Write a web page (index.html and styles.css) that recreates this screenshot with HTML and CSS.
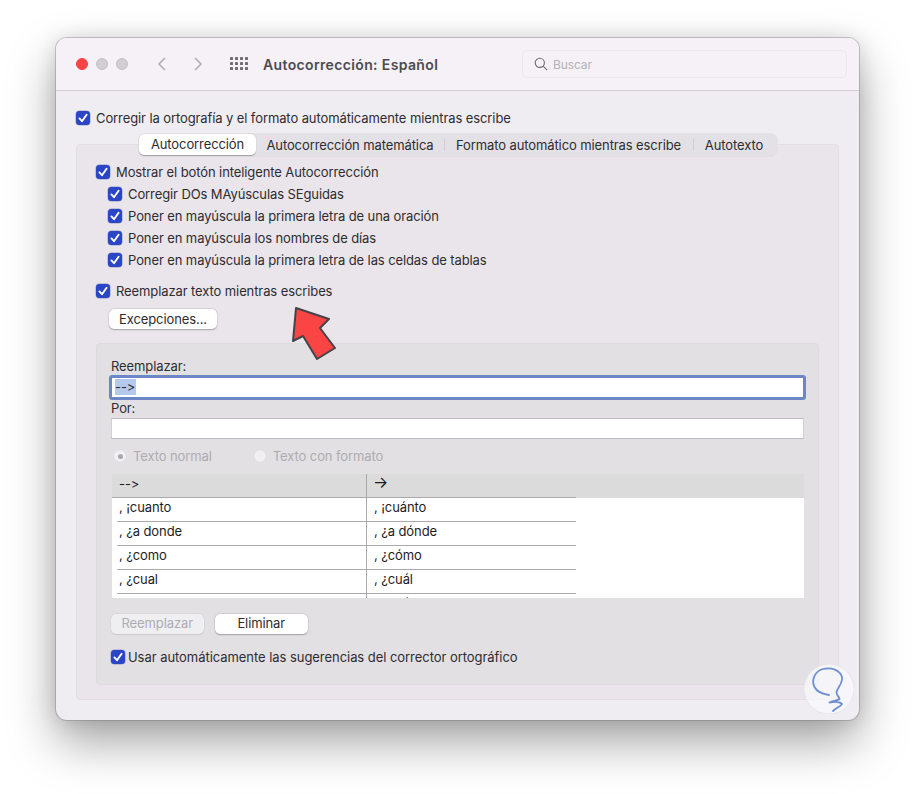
FILE: index.html
```html
<!DOCTYPE html>
<html lang="es">
<head>
<meta charset="utf-8">
<title>Autocorrección: Español</title>
<link rel="stylesheet" href="styles.css">
</head>
<body>
<div class="window">
  <header class="titlebar">
    <div class="lights"><span class="light red"></span><span class="light"></span><span class="light"></span></div>
    <svg class="chev" width="12" height="16" viewBox="0 0 12 16"><path d="M9 2 3 8l6 6"/></svg>
    <svg class="chev next" width="12" height="16" viewBox="0 0 12 16"><path d="m3 2 6 6-6 6"/></svg>
    <svg class="grid-icon" width="19" height="14" viewBox="0 0 19 14"><g><rect x="0" y="0" width="3" height="3" rx=".6"/><rect x="5" y="0" width="3" height="3" rx=".6"/><rect x="10" y="0" width="3" height="3" rx=".6"/><rect x="15" y="0" width="3" height="3" rx=".6"/><rect x="0" y="5" width="3" height="3" rx=".6"/><rect x="5" y="5" width="3" height="3" rx=".6"/><rect x="10" y="5" width="3" height="3" rx=".6"/><rect x="15" y="5" width="3" height="3" rx=".6"/><rect x="0" y="10" width="3" height="3" rx=".6"/><rect x="5" y="10" width="3" height="3" rx=".6"/><rect x="10" y="10" width="3" height="3" rx=".6"/><rect x="15" y="10" width="3" height="3" rx=".6"/></g></svg>
    <h1 class="title">Autocorrección: Español</h1>
    <div class="search">
      <svg width="14" height="14" viewBox="0 0 14 14"><circle cx="5.8" cy="5.8" r="4.6"/><path d="m9.2 9.2 4 4"/></svg>
      <span>Buscar</span>
    </div>
  </header>
  <main class="content">
    <label class="row"><span class="check"><svg viewBox="0 0 14 14"><path d="M3.4 7.4 6 10.2l4.6-6.4"/></svg></span>Corregir la ortografía y el formato automáticamente mientras escribe</label>
    <nav class="tabs">
      <span class="tab active">Autocorrección</span>
      <span class="tab t2">Autocorrección matemática</span>
      <span class="sep"></span>
      <span class="tab t3">Formato automático mientras escribe</span>
      <span class="sep"></span>
      <span class="tab t4">Autotexto</span>
    </nav>
    <section class="group">
      <label class="row"><span class="check"><svg viewBox="0 0 14 14"><path d="M3.4 7.4 6 10.2l4.6-6.4"/></svg></span>Mostrar el botón inteligente Autocorrección</label>
      <label class="row sub"><span class="check"><svg viewBox="0 0 14 14"><path d="M3.4 7.4 6 10.2l4.6-6.4"/></svg></span>Corregir DOs MAyúsculas SEguidas</label>
      <label class="row sub"><span class="check"><svg viewBox="0 0 14 14"><path d="M3.4 7.4 6 10.2l4.6-6.4"/></svg></span>Poner en mayúscula la primera letra de una oración</label>
      <label class="row sub"><span class="check"><svg viewBox="0 0 14 14"><path d="M3.4 7.4 6 10.2l4.6-6.4"/></svg></span>Poner en mayúscula los nombres de días</label>
      <label class="row sub"><span class="check"><svg viewBox="0 0 14 14"><path d="M3.4 7.4 6 10.2l4.6-6.4"/></svg></span>Poner en mayúscula la primera letra de las celdas de tablas</label>
      <label class="row replace"><span class="check"><svg viewBox="0 0 14 14"><path d="M3.4 7.4 6 10.2l4.6-6.4"/></svg></span>Reemplazar texto mientras escribes</label>
      <button class="btn except">Excepciones...</button>
      <div class="panel">
        <div class="field-label first">Reemplazar:</div>
        <div class="input focus"><span class="selected">--&gt;</span></div>
        <div class="field-label">Por:</div>
        <div class="input plain"></div>
        <div class="radios">
          <span class="radio on"></span><span class="radio-text r1">Texto normal</span>
          <span class="radio"></span><span class="radio-text">Texto con formato</span>
        </div>
        <div class="table">
          <div class="thead"><span class="c1">--&gt;</span><span class="c2 arrow-cell">→</span></div>
          <div class="trow"><span class="c1">, ¡cuanto</span><span class="c2">, ¡cuánto</span></div>
          <div class="trow"><span class="c1">, ¿a donde</span><span class="c2">, ¿a dónde</span></div>
          <div class="trow"><span class="c1">, ¿como</span><span class="c2">, ¿cómo</span></div>
          <div class="trow"><span class="c1">, ¿cual</span><span class="c2">, ¿cuál</span></div>
          <div class="trow"><span class="c1">, ¿cuando</span><span class="c2">, ¿cuándo</span></div>
        </div>
        <div class="actions">
          <button class="btn disabled">Reemplazar</button>
          <button class="btn remove">Eliminar</button>
        </div>
        <label class="row spell"><span class="check"><svg viewBox="0 0 14 14"><path d="M3.4 7.4 6 10.2l4.6-6.4"/></svg></span>Usar automáticamente las sugerencias del corrector ortográfico</label>
      </div>
    </section>
  </main>
  <svg class="pointer" width="52" height="62" viewBox="0 0 52 62"><path d="M4 3 37 14 28 23 43 43 25 54 11 31 1 36Z"/></svg>
  <svg class="logo" width="50" height="50" viewBox="0 0 50 50"><circle class="disc" cx="25" cy="25" r="25"/><path class="mark" d="M25 31C18 30 13 28 10.500 23 7 16 11 7 19 5c8-2 17 1 19 8 1 6-4 10-5.500 15-.5 3 3 5 3 7-2 2-7 1-10 3.500 3-.5 10-1 12.500 1.500-2 3-6 4-9 7"/></svg>
</div>
</body>
</html>
```
FILE: styles.css
```css
* { box-sizing: border-box; }
html, body { margin: 0; height: 100%; }
body {
  background: #fff;
  padding: 38px 56px 0;
  font-family: Inter, "Liberation Sans", sans-serif;
  font-size: 13px;
  letter-spacing: -.1px;
  font-variant-ligatures: none;
  font-feature-settings: "calt" 0;
  color: #2e2c30;
  overflow: hidden;
}
.window {
  position: relative;
  width: 803px;
  height: 682px;
  display: flex;
  flex-direction: column;
  background: #f0edf2;
  border-radius: 11px;
  box-shadow: 0 0 0 1px rgba(120,118,122,.38), 0 22px 48px rgba(0,0,0,.36), 0 0 20px rgba(0,0,0,.12);
}
.titlebar {
  height: 53px;
  flex: none;
  display: flex;
  align-items: center;
  padding: 0 12px 0 20px;
  background: #f5f1f7;
  border-bottom: 1px solid #cfcdd1;
  border-radius: 11px 11px 0 0;
}
.lights { display: flex; gap: 8px; margin-right: 28px; }
.light { width: 12px; height: 12px; border-radius: 50%; background: #d0ced2; border: 1px solid #c2c0c4; }
.light.red { background: #fb4345; border-color: #f54043; }
.chev { fill: none; stroke: #b1afb3; stroke-width: 1.6; margin-right: 24px; }
.chev.next { margin-right: 26px; }
.grid-icon { fill: #706e72; margin-right: 14px; }
.title { margin: 0; font-size: 14px; font-weight: 600; color: #4d4b4f; letter-spacing: .36px; white-space: nowrap; }
.search {
  margin-left: auto;
  width: 325px;
  height: 28px;
  display: flex;
  align-items: center;
  gap: 5px;
  padding-left: 11px;
  border: 1px solid #ebe8ed;
  border-radius: 5px;
  color: #b4b2b6;
  font-size: 12px;
}
.search svg { fill: none; stroke: #6d6b6f; stroke-width: 1.1; }
.content { flex: 1; display: flex; flex-direction: column; padding: 16px 20px 20px; }
.row { display: flex; align-items: center; gap: 6px; height: 22px; white-space: nowrap; flex: none; }
.check {
  width: 14px;
  height: 14px;
  flex: none;
  border-radius: 3.500px;
  background: #2a46c6;
  box-shadow: 0 0 0 .5px rgba(30,50,140,.4);
}
.check svg { display: block; width: 14px; height: 14px; fill: none; stroke: #fff; stroke-width: 1.9; stroke-linecap: round; stroke-linejoin: round; }
.tabs {
  position: relative;
  z-index: 1;
  align-self: center;
  display: flex;
  align-items: center;
  margin-top: 5px;
  height: 22px;
  line-height: 20px;
  width: 638px;
  background: #e4e1e6;
  border-radius: 6px;
  box-shadow: 0 0 0 .5px #dcd9de;
  white-space: nowrap;
}
.tab { text-align: center; }
.tab.active {
  width: 117px;
  height: 21px;
  align-self: flex-start;
  line-height: 21px;
  padding-left: 1px;
  background: #fff;
  border-radius: 5px;
  box-shadow: 0 .5px 1px rgba(0,0,0,.3);
}
.t2 { width: 188px; padding-left: 1px; }
.t3 { width: 248px; }
.t4 { width: 81px; }
.sep { width: 1px; height: 12px; background: #d0ced2; flex: none; }
.group {
  flex: 1;
  margin-top: -12px;
  padding: 16px 19px 14px;
  background: #e9e5ea;
  border: 1px solid #e2dfe4;
  border-radius: 4px;
  display: flex;
  flex-direction: column;
  align-items: stretch;
}
.row.sub { margin-left: 12px; }
.row.replace { margin-top: 9px; }
.btn {
  font: inherit;
  letter-spacing: inherit;
  font-feature-settings: inherit;
  color: #2e2c30;
  height: 20px;
  padding: 0 0 2px;
  border: 0;
  border-radius: 5px;
  background: #fff;
  box-shadow: 0 0 0 .25px rgba(0,0,0,.12), 0 .5px 1.500px rgba(0,0,0,.28);
}
.btn.except { width: 108px; margin: 7px 0 0 13px; align-self: flex-start; flex: none; padding-bottom: 1px; }
.panel {
  flex: 1;
  margin-top: 14px;
  padding: 14px 14px 16px;
  background: #e3e0e4;
  border: 1px solid #dedbdf;
  border-radius: 4px;
  display: flex;
  flex-direction: column;
}
.field-label { height: 16px; line-height: 16px; flex: none; }
.input { background: #fff; flex: none; }
.input.focus {
  height: 25px;
  margin: 1px -2px 0;
  padding: 1px 0 0 3px;
  border: 3px solid #6d86c6;
  border-radius: 3px;
}
.selected { display: block; background: #b5c9ec; width: 21px; height: 16px; line-height: 16px; }
.input.plain { height: 21px; margin-top: 2px; border: 1px solid #d2d0d4; border-top-color: #bfbdc1; border-bottom-color: #bfbdc1; }
.radios { display: flex; align-items: center; height: 18px; margin-top: 8px; padding-left: 3px; color: #aeacb0; flex: none; }
.radio { width: 12px; height: 12px; border-radius: 50%; background: #f0eff1; box-shadow: 0 0 0 .5px #d8d6da; flex: none; margin-right: 7px; display: flex; align-items: center; justify-content: center; }
.radio.on::after { content: ""; width: 5px; height: 5px; border-radius: 50%; background: #a9a7ab; }
.r1 { margin-right: 42px; }
.table {
  height: 124px;
  margin: 9px 0 0 1px;
  overflow: hidden;
  background: #fff;
  flex: none;
}
.thead, .trow {
  display: grid;
  grid-template-columns: 254px 210px;
  height: 24px;
  line-height: 18px;
  color: #1d1c1e;
}
.thead { background: #dcdbdc; }
.thead .c1 { padding-left: 7px; line-height: 20px; }
.thead .arrow-cell { font-size: 16px; line-height: 16px; padding-left: 6px; }
.c1, .c2 { display: block; border-bottom: 1px solid #a9a8aa; }
.trow .c1 { margin-left: 5px; padding-left: 2px; }
.c2 { border-left: 1px solid #a9a8aa; padding-left: 7px; }
.actions { display: flex; gap: 11.500px; margin-top: 16px; flex: none; }
.actions .btn { width: 92.500px; }
.btn.disabled { background: #efeef0; color: #aeacb0; box-shadow: 0 0 0 .5px rgba(0,0,0,.06), 0 .5px 1px rgba(0,0,0,.08); }
.row.spell { margin-top: 12px; gap: 3px; letter-spacing: -.05px; }
.pointer { position: absolute; left: 236px; top: 267px; fill: #fb4444; stroke: #45434a; stroke-width: 2; stroke-linejoin: round; }
.logo { position: absolute; left: 748px; top: 626px; }
.disc { fill: rgba(250,249,252,.72); stroke: rgba(225,224,232,.7); }
.mark { fill: none; stroke: #6f8fd4; stroke-width: 1.800; stroke-linecap: round; stroke-linejoin: round; }
```
